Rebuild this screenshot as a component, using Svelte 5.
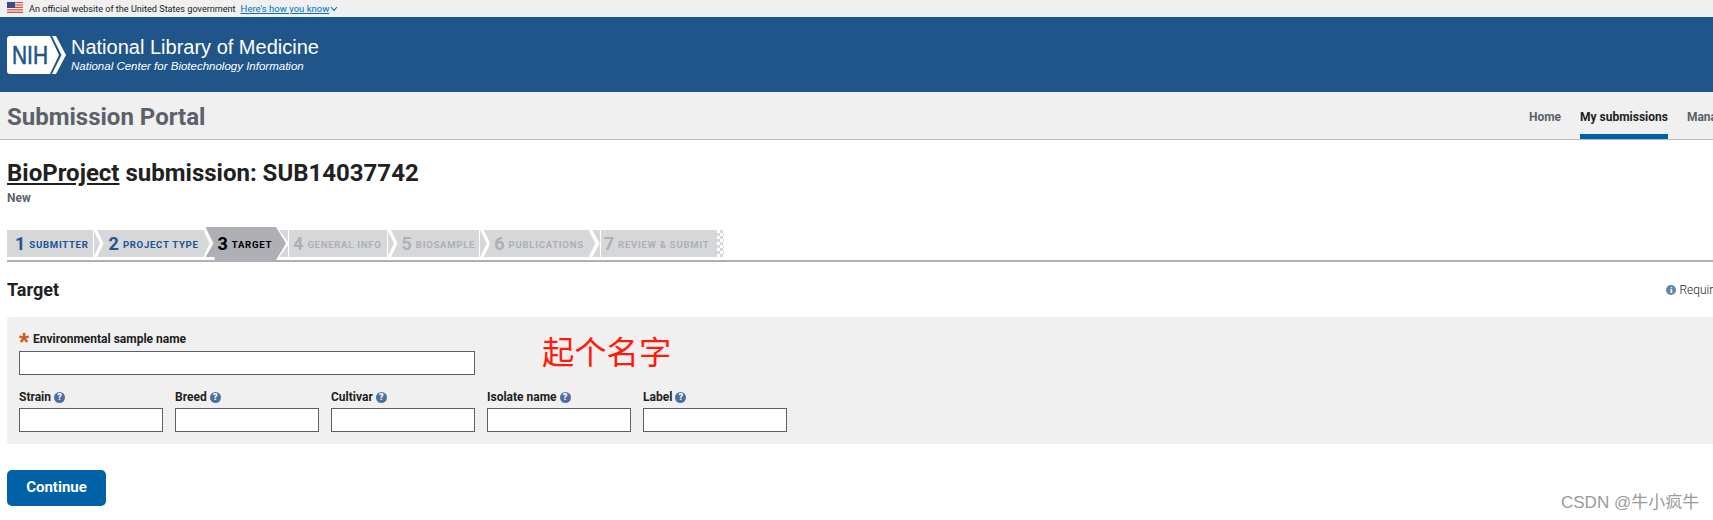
<script>
	const steps = [
		{ n: 1, label: "Submitter", cls: "first done" },
		{ n: 2, label: "Project type", cls: "second done" },
		{ n: 3, label: "Target", cls: "active" },
		{ n: 4, label: "General info", cls: "fourth todo" },
		{ n: 5, label: "Biosample", cls: "fifth todo" },
		{ n: 6, label: "Publications", cls: "sixth todo" },
		{ n: 7, label: "Review & submit", cls: "last todo" }
	];
	const fields = ["Strain", "Breed", "Cultivar", "Isolate name", "Label"];
</script>

<div class="page">
	<div class="gov-banner">
		<svg class="flag" width="16" height="11" viewBox="0 0 16 11">
			<rect width="16" height="11" fill="#f4f4f4" />
			<rect y="0" width="16" height="1.2" fill="#d2553f" />
			<rect y="2.4" width="16" height="1.2" fill="#d2553f" />
			<rect y="4.8" width="16" height="1.2" fill="#d2553f" />
			<rect y="7.2" width="16" height="1.2" fill="#d2553f" />
			<rect y="9.6" width="16" height="1.4" fill="#d2553f" />
			<rect width="8" height="6" fill="#3d4a8c" />
		</svg>
		<span>An official website of the United States government</span>
		<a href="#top" class="how">Here's how you know</a>
		<svg class="caret" width="8" height="6" viewBox="0 0 8 6">
			<path d="M1 1 L4 4.4 L7 1" fill="none" stroke="#0071bc" stroke-width="1.1" />
		</svg>
	</div>

	<header class="nih">
		<svg class="logo" width="59" height="38" viewBox="0 0 59 38">
			<path d="M3 0 H43 L52 19 L43 38 H3 Q0 38 0 35 V3 Q0 0 3 0 Z" fill="#fff" />
			<path d="M45 0 H49 L59 19 L49 38 H45 L54.5 19 Z" fill="#fff" />
			<text x="5" y="28" class="logo-text" textLength="36" lengthAdjust="spacingAndGlyphs">NIH</text>
		</svg>
		<div class="nih-text">
			<div class="nih-title">National Library of Medicine</div>
			<div class="nih-sub">National Center for Biotechnology Information</div>
		</div>
	</header>

	<div class="portal-bar">
		<div class="portal-title">Submission Portal</div>
		<nav class="tabs">
			<a href="#top">Home</a>
			<a href="#top" class="current">My submissions</a>
			<a href="#top">Manage data</a>
		</nav>
	</div>

	<main class="content">
		<h1><a href="#top">BioProject</a> submission: SUB14037742</h1>
		<div class="status">New</div>

		<div class="steps">
			{#each steps as step}
				<div class="step {step.cls}">
					<span class="num">{step.n}</span>
					<span class="label">{step.label}</span>
				</div>
			{/each}
			<div class="checker"></div>
		</div>

		<div class="section-head">
			<h2>Target</h2>
			<div class="required"><span class="info">i</span>Required</div>
		</div>

		<div class="panel">
			<div class="field wide">
				<label for="env"><span class="star">*</span>Environmental sample name</label>
				<input id="env" type="text" />
			</div>
			<div class="row">
				{#each fields as f}
					<div class="field">
						<label for={f}>{f} <span class="help">?</span></label>
						<input id={f} type="text" />
					</div>
				{/each}
			</div>
			<div class="note">起个名字</div>
		</div>

		<button class="continue">Continue</button>
	</main>

	<div class="watermark">CSDN @牛小疯牛</div>
</div>

<style>
	:global(body) {
		margin: 0;
		background: #fff;
		overflow: hidden;
	}

	.page {
		position: relative;
		width: 1713px;
		height: 520px;
		overflow: hidden;
		font-family: Roboto, "Liberation Sans", sans-serif;
		color: #212121;
	}

	.gov-banner {
		height: 17px;
		background: #f0f0f0;
		display: flex;
		align-items: center;
		padding-left: 7px;
		font-family: Roboto, "Liberation Sans", sans-serif;
		font-size: 9.1px;
		white-space: nowrap;
	}

	.flag {
		margin-right: 6px;
		margin-top: -3px;
	}

	.how {
		margin-left: 5px;
		font-size: 9.5px;
		color: #0071bc;
		text-decoration: underline;
	}

	.caret {
		margin-left: 1px;
	}

	.nih {
		height: 75px;
		background: #20558a;
		display: flex;
		align-items: center;
		padding-left: 7px;
		color: #fff;
		font-family: "Liberation Sans", Arial, sans-serif;
	}

	.logo-text {
		font-size: 26px;
		fill: #20558a;
		stroke: #20558a;
		stroke-width: 0.6;
		font-family: "Liberation Sans", Arial, sans-serif;
	}

	.nih-text {
		margin-left: 5px;
	}

	.nih-title {
		font-size: 20px;
		line-height: 23px;
	}

	.nih-sub {
		font-size: 11.5px;
		font-style: italic;
		line-height: 14px;
	}

	.portal-bar {
		height: 47px;
		background: #f0f0f0;
		border-bottom: 1px solid #bbb;
		display: flex;
		justify-content: space-between;
		padding-left: 7px;
		width: 1750px;
	}

	.portal-title {
		font-size: 24px;
		font-weight: 700;
		color: #5b616b;
		line-height: 51px;
	}

	.tabs {
		display: flex;
		gap: 19px;
		align-items: flex-end;
	}

	.tabs a {
		height: 47px;
		box-sizing: border-box;
		padding-top: 18px;
		font-size: 12px;
		font-weight: 700;
		color: #5b616b;
		text-decoration: none;
		white-space: nowrap;
	}

	.tabs a.current {
		color: #212121;
		border-bottom: 5px solid #0062a6;
	}

	.content {
		padding: 0 0 0 7px;
	}

	h1 {
		margin: 18px 0 0;
		font-size: 24px;
		line-height: 30px;
		font-weight: 700;
	}

	h1 a {
		color: #212121;
	}

	.status {
		margin-top: 3px;
		font-size: 12px;
		font-weight: 700;
		line-height: 14px;
		color: #5b616b;
	}

	.steps {
		margin-top: 22px;
		height: 33px;
		width: 1720px;
		display: flex;
		align-items: center;
		border-bottom: 2px solid #aeb0b5;
	}

	.step {
		position: relative;
		height: 27px;
		display: flex;
		align-items: center;
		gap: 4px;
		background: #d6d7d9;
		white-space: nowrap;
	}

	/* white arrow stripe between two steps */
	.second::before,
	.fifth::before,
	.sixth::before,
	.sixth::after,
	.fourth::before {
		content: "";
		position: absolute;
		top: 0;
		bottom: 0;
		width: 10px;
		background: #fff;
		clip-path: polygon(0 0, 3.5px 0, 100% 50%, 3.5px 100%, 0 100%, 6.5px 50%);
	}

	.second::before,
	.fifth::before,
	.sixth::before {
		left: 0;
	}

	.first {
		padding: 0 4px 0 8px;
	}

	.second {
		margin-left: 1px;
		padding: 0 11px 0 15px;
		clip-path: polygon(0 0, calc(100% - 6px) 0, 100% 50%, calc(100% - 6px) 100%, 0 100%);
	}

	.active {
		z-index: 1;
		height: 33px;
		margin-left: -4px;
		padding: 0 14px 0 12px;
		background: #aeb0b5;
		color: #000;
		clip-path: polygon(0 0, calc(100% - 10px) 0, 100% 50%, calc(100% - 10px) 100%, 9px 100%, 9px 30px, 0 30px, 8px 50%);
	}

	.fourth {
		margin-left: -11px;
		padding: 0 5px 0 18px;
	}

	.fourth::before {
		left: 0;
		width: 14px;
		clip-path: polygon(0 0, 4px 0, 100% 50%, 4px 100%, 0 100%, 10px 50%);
	}

	.fourth::after {
		content: "";
		position: absolute;
		left: 13px;
		top: 0;
		bottom: 0;
		width: 1px;
		background: #fff;
	}

	.fifth {
		margin-left: 1px;
		padding: 0 4px 0 14px;
	}

	.sixth {
		margin-left: 1px;
		padding: 0 16px 0 14px;
	}

	.sixth::after {
		right: 0;
		width: 11px;
	}

	.last {
		margin-left: 1px;
		padding: 0 8px 0 3px;
	}

	.num {
		font-size: 18px;
		font-weight: 700;
		line-height: 1;
	}

	.label {
		font-size: 9.6px;
		font-weight: 700;
		letter-spacing: 0.7px;
		text-transform: uppercase;
		padding-top: 2px;
	}

	.done {
		color: #205493;
	}

	.active .num,
	.active .label {
		color: #000;
	}

	.todo {
		color: #aeb0b5;
	}

	.checker {
		width: 7px;
		height: 27px;
		background-image: repeating-conic-gradient(#d6d7d9 0 25%, #fff 0 50%);
		background-size: 6px 6px;
	}

	.section-head {
		display: flex;
		justify-content: space-between;
		margin-top: 17px;
		width: 1719px;
	}

	h2 {
		margin: 0;
		font-size: 18px;
		line-height: 22px;
		font-weight: 700;
	}

	.required {
		font-size: 12px;
		font-weight: 300;
		display: flex;
		align-items: center;
		gap: 3px;
		white-space: nowrap;
	}

	.info {
		width: 10px;
		height: 10px;
		border-radius: 50%;
		background: #5f86a8;
		color: #fff;
		font-family: "Liberation Serif", serif;
		font-size: 9px;
		font-weight: 700;
		line-height: 10px;
		text-align: center;
	}

	.panel {
		position: relative;
		margin-top: 16px;
		width: 1780px;
		box-sizing: border-box;
		height: 127px;
		background: #f0f0f0;
		border-radius: 3px;
		padding: 15px 12px 0;
	}

	.field {
		display: flex;
		flex-direction: column;
	}

	.field label {
		display: flex;
		align-items: center;
		gap: 3px;
		height: 14px;
		margin-bottom: 4px;
		font-size: 12px;
		font-weight: 700;
		line-height: 14px;
		white-space: nowrap;
	}

	.wide label {
		margin-bottom: 5px;
	}

	.star {
		width: 11px;
		color: #cd5b28;
		font-size: 26px;
		font-weight: 700;
		line-height: 14px;
		padding-top: 6px;
		height: 14px;
		font-family: "Liberation Sans", sans-serif;
	}

	input {
		box-sizing: border-box;
		height: 24px;
		width: 144px;
		margin: 0;
		padding: 0;
		border: 1px solid #5b616b;
		border-radius: 0;
		background: #fff;
	}

	.wide input {
		width: 456px;
	}

	.row {
		display: flex;
		gap: 12px;
		margin-top: 15px;
	}

	.help {
		width: 11px;
		height: 11px;
		border-radius: 50%;
		background: #4f6f9f;
		color: #fff;
		font-size: 9px;
		font-weight: 900;
		line-height: 11px;
		text-align: center;
	}

	.note {
		position: absolute;
		left: 535px;
		top: 14px;
		font-family: "Noto Sans CJK SC", sans-serif;
		font-size: 32.3px;
		line-height: 38px;
		color: #ff1a0a;
	}

	.continue {
		display: block;
		margin-top: 26px;
		width: 99px;
		height: 36px;
		border: 0;
		border-radius: 5px;
		background: #0062a6;
		color: #fff;
		font-family: Roboto, sans-serif;
		font-size: 15px;
		font-weight: 700;
		padding: 0 0 2px;
	}

	.watermark {
		position: absolute;
		left: 1561px;
		top: 493px;
		font-family: "Liberation Sans", "Noto Sans CJK SC", sans-serif;
		font-size: 17px;
		line-height: 20px;
		color: #9a9a9a;
		white-space: nowrap;
	}
</style>
